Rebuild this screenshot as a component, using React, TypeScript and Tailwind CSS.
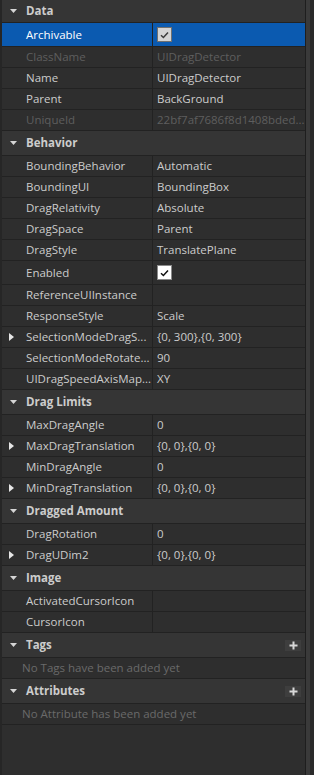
import React from "react";

type Row = {
  name: string;
  value?: string;
  disabled?: boolean;
  selected?: boolean;
  check?: "gray" | "white";
  expand?: boolean;
};

type Section = {
  title: string;
  first?: boolean;
  rows?: Row[];
  empty?: string;
  add?: boolean;
};

const sections: Section[] = [
  {
    title: "Data",
    first: true,
    rows: [
      { name: "Archivable", selected: true, check: "gray" },
      { name: "ClassName", value: "UIDragDetector", disabled: true },
      { name: "Name", value: "UIDragDetector" },
      { name: "Parent", value: "BackGround" },
      { name: "UniqueId", value: "22bf7af7686f8d1408bded...", disabled: true },
    ],
  },
  {
    title: "Behavior",
    rows: [
      { name: "BoundingBehavior", value: "Automatic" },
      { name: "BoundingUI", value: "BoundingBox" },
      { name: "DragRelativity", value: "Absolute" },
      { name: "DragSpace", value: "Parent" },
      { name: "DragStyle", value: "TranslatePlane" },
      { name: "Enabled", check: "white" },
      { name: "ReferenceUIInstance", value: "" },
      { name: "ResponseStyle", value: "Scale" },
      { name: "SelectionModeDragS...", value: "{0, 300},{0, 300}", expand: true },
      { name: "SelectionModeRotate...", value: "90" },
      { name: "UIDragSpeedAxisMap...", value: "XY" },
    ],
  },
  {
    title: "Drag Limits",
    rows: [
      { name: "MaxDragAngle", value: "0" },
      { name: "MaxDragTranslation", value: "{0, 0},{0, 0}", expand: true },
      { name: "MinDragAngle", value: "0" },
      { name: "MinDragTranslation", value: "{0, 0},{0, 0}", expand: true },
    ],
  },
  {
    title: "Dragged Amount",
    rows: [
      { name: "DragRotation", value: "0" },
      { name: "DragUDim2", value: "{0, 0},{0, 0}", expand: true },
    ],
  },
  {
    title: "Image",
    rows: [
      { name: "ActivatedCursorIcon", value: "" },
      { name: "CursorIcon", value: "" },
    ],
  },
  { title: "Tags", empty: "No Tags have been added yet", add: true },
  { title: "Attributes", empty: "No Attribute has been added yet", add: true },
];

function Checkbox({ kind }: { kind: "gray" | "white" }) {
  const gray = kind === "gray";
  return (
    <div
      className={
        gray
          ? "flex h-[15px] w-[15px] items-center justify-center border border-[#707070] bg-[#d4d4d4]"
          : "flex h-[15px] w-[15px] items-center justify-center border border-[#8a8a8a] bg-white"
      }
    >
      <svg width="9" height="8" viewBox="0 0 9 8">
        <path
          d="M1 4.2 L3.4 6.5 L8 1.5"
          fill="none"
          stroke={gray ? "#3c3c3c" : "#111111"}
          strokeWidth="1.5"
        />
      </svg>
    </div>
  );
}

function PropRow({ row }: { row: Row }) {
  const tall = !!row.check;
  const nameColor = row.selected
    ? "text-white"
    : row.disabled
    ? "text-[#5e5e5e]"
    : "text-[#cccccc]";
  return (
    <div
      className={`flex border-b border-[#222222] ${tall ? "h-[24px]" : "h-[21px]"} ${
        row.selected ? "bg-[#0b5ab0]" : "bg-[#2e2e2e]"
      }`}
    >
      <div className="relative flex w-[150px] shrink-0 items-center pl-[24px]">
        {row.expand && (
          <svg className="absolute left-[7px]" width="5" height="8" viewBox="0 0 5 8">
            <path d="M0 0 L5 4 L0 8 Z" fill="#e6e6e6" />
          </svg>
        )}
        <span className={`whitespace-nowrap ${nameColor}`}>{row.name}</span>
      </div>
      <div className="w-px shrink-0 bg-[#222222]" />
      <div className="flex min-w-0 flex-1 items-center overflow-hidden pl-[4px]">
        {row.check ? (
          <Checkbox kind={row.check} />
        ) : (
          <span
            className={`whitespace-nowrap ${row.disabled ? "text-[#5e5e5e]" : "text-[#cccccc]"}`}
          >
            {row.value}
          </span>
        )}
      </div>
    </div>
  );
}

function SectionBlock({ s }: { s: Section }) {
  return (
    <div>
      <div
        className={`flex items-center border-b border-[#222222] bg-[#353535] pr-[4px] ${
          s.first ? "h-[23px]" : "h-[25px]"
        }`}
      >
        <div className="flex w-[24px] shrink-0 justify-center">
          <svg width="7" height="4" viewBox="0 0 7 4" className="mr-[2px]">
            <path d="M0 0 L7 0 L3.5 4 Z" fill="#d6d6d6" />
          </svg>
        </div>
        <span className="flex-1 font-bold text-[#cccccc]">{s.title}</span>
        {s.add && (
          <div className="flex h-[11px] w-[16px] items-center justify-center bg-[#3e3e3e]">
            <svg width="9" height="9" viewBox="0 0 9 9">
              <path d="M4.5 0.5 V8.5 M0.5 4.5 H8.5" stroke="#d8d8d8" strokeWidth="2" />
            </svg>
          </div>
        )}
      </div>
      {s.rows?.map((r) => (
        <PropRow key={r.name} row={r} />
      ))}
      {s.empty && (
        <div className="flex h-[21px] items-center border-b border-[#222222] bg-[#2e2e2e] pl-[20px]">
          <span className="whitespace-nowrap text-[#6a6a6a]">{s.empty}</span>
        </div>
      )}
    </div>
  );
}

export default function App() {
  return (
    <div className="flex h-[775px] w-[314px] overflow-hidden bg-[#2e2e2e] font-['Open_Sans',sans-serif] text-[11.5px] leading-none">
      <div className="flex w-[305px] shrink-0 flex-col border-l-2 border-[#262626]">
        {sections.map((s) => (
          <SectionBlock key={s.title} s={s} />
        ))}
        <div className="flex-1 bg-[#2e2e2e]" />
      </div>
      <div className="w-px bg-[#1e1e1e]" />
      <div className="w-[4px] bg-[#3a3a3a]" />
      <div className="flex-1 bg-[#2a2a2a]" />
    </div>
  );
}
